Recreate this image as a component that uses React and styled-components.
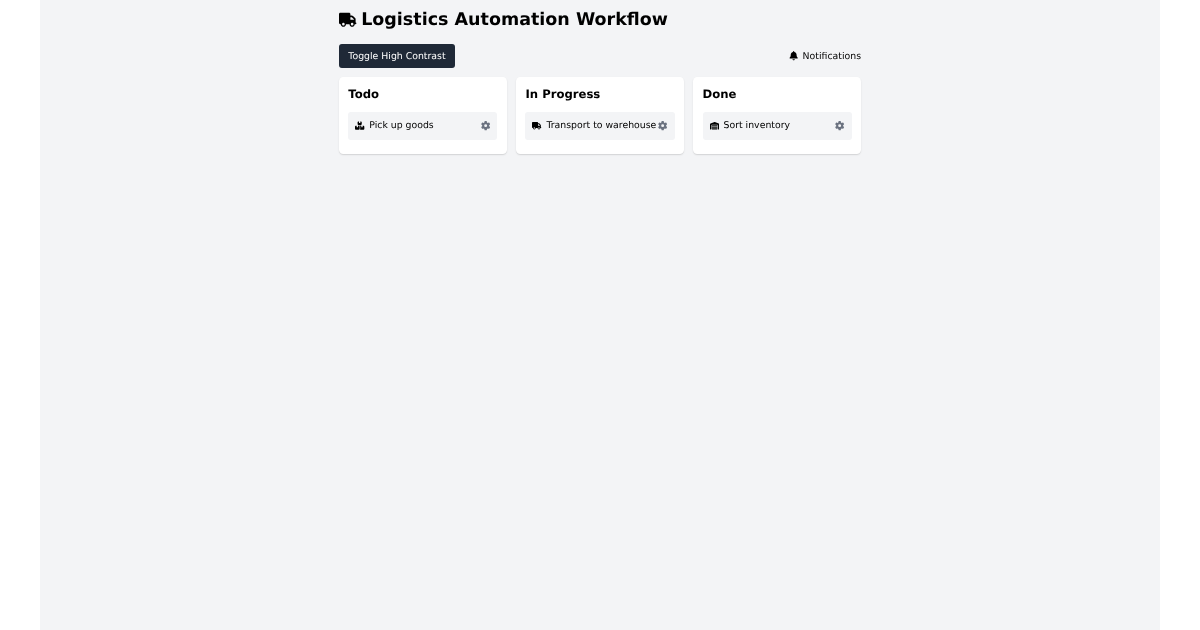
import React from "react";
import styled, { createGlobalStyle } from "styled-components";
import { FaTruck, FaBell, FaGear, FaBoxesStacked, FaWarehouse } from "react-icons/fa6";

const Global = createGlobalStyle`
  html, body { margin: 0; background: #fff; }
  body { font-family: "DejaVu Sans", sans-serif; color: #000; text-rendering: geometricPrecision; }
  * { box-sizing: border-box; }
`;
const Page = styled.div`
  width: 1120px; height: 630px; margin: 0 auto; background: #f3f4f6;
  display: flex; justify-content: center; overflow: hidden;
`;
const Content = styled.main`
  width: 522px; display: flex; flex-direction: column; will-change: transform;
`;
const Title = styled.h1`
  margin: 0; height: 40px; display: flex; align-items: center; gap: 4.67px;
  font-size: 17.5px; line-height: 27px; font-weight: 700; padding-top: 1.4px;
  svg { width: 17.5px; height: 17.5px; flex: none; margin-top: -2px; }
`;
const Toolbar = styled.div`
  display: flex; justify-content: space-between; align-items: center;
  margin-top: 4px; height: 24px;
`;
const Button = styled.button`
  height: 24px; padding: 0 9.33px; border: 0; border-radius: 2.9px; background: #1f2937; color: #fff;
  font: 400 9.33px "DejaVu Sans", sans-serif; text-rendering: geometricPrecision;
`;
const Notice = styled.div`
  display: flex; align-items: center; gap: 4px; font-size: 9.33px;
  svg { width: 9.33px; height: 9.33px; }
`;
const Board = styled.div`
  display: grid; grid-template-columns: repeat(3, 1fr); gap: 9.33px; margin-top: 9.33px;
`;
const Column = styled.section`
  background: #fff; border-radius: 4.4px; padding: 8.6px 9.33px 14px;
  box-shadow: 0 1px 2px rgba(0,0,0,.1), 0 1px 1px rgba(0,0,0,.05);
  height: 77px;
`;
const ColumnTitle = styled.h2`
  margin: 0 0 8.5px; font-size: 11.67px; line-height: 17.5px; font-weight: 700;
`;
const Task = styled.div`
  height: 28px; background: #f3f4f6; border-radius: 2.9px; padding: 0 7px;
  display: flex; align-items: center; justify-content: space-between; font-size: 9.33px;
`;
const TaskLabel = styled.span`
  display: flex; align-items: center; gap: 4.67px; white-space: nowrap;
  svg { width: 9.33px; height: 9.33px; flex: none; }
`;
const Gear = styled(FaGear)`
  width: 9.33px; height: 9.33px; color: #6b7280; flex: none;
`;

const columns = [
  { name: "Todo", task: "Pick up goods", Icon: FaBoxesStacked },
  { name: "In Progress", task: "Transport to warehouse", Icon: FaTruck },
  { name: "Done", task: "Sort inventory", Icon: FaWarehouse },
];

export default function App() {
  return (
    <Page>
      <Global />
      <Content>
        <Title><FaTruck />Logistics Automation Workflow</Title>
        <Toolbar>
          <Button>Toggle High Contrast</Button>
          <Notice><FaBell />Notifications</Notice>
        </Toolbar>
        <Board>
          {columns.map(({ name, task, Icon }) => (
            <Column key={name}>
              <ColumnTitle>{name}</ColumnTitle>
              <Task>
                <TaskLabel><Icon />{task}</TaskLabel>
                <Gear />
              </Task>
            </Column>
          ))}
        </Board>
      </Content>
    </Page>
  );
}
